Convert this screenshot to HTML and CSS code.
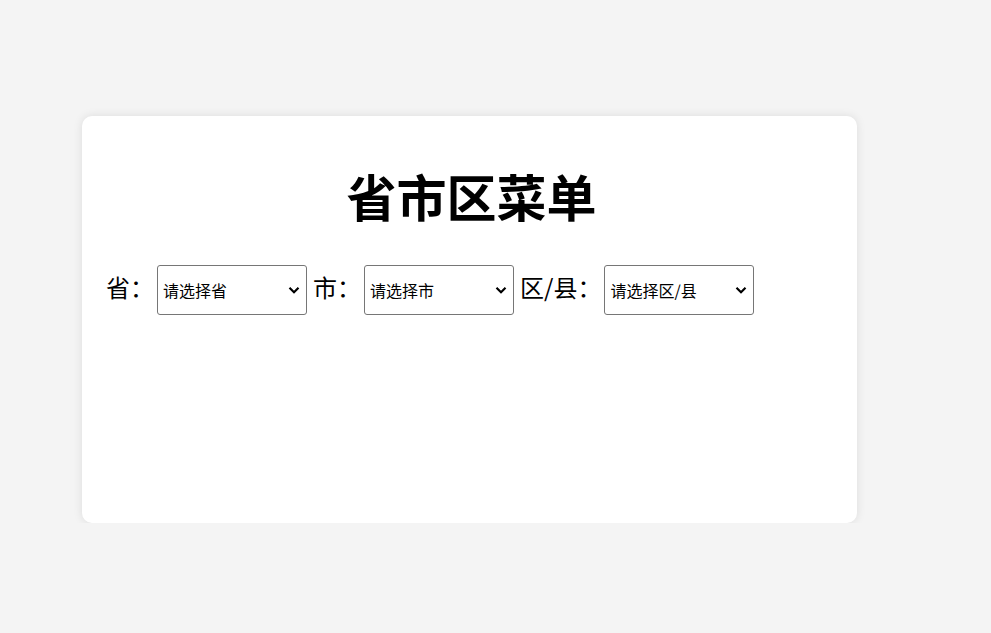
FILE: index.html
```html
<!DOCTYPE html>
<html lang="zh-CN">
<head>
<meta charset="utf-8">
<title>省市区菜单</title>
<link rel="stylesheet" href="styles.css">
</head>
<body>
<div class="card">
  <h1 class="title">省市区菜单</h1>
  <div class="row">
    <label class="lbl">省：</label>
    <select class="sel"><option>请选择省</option></select>
    <label class="lbl">市：</label>
    <select class="sel"><option>请选择市</option></select>
    <label class="lbl">区/县：</label>
    <select class="sel"><option>请选择区/县</option></select>
  </div>
</div>
</body>
</html>
```

FILE: styles.css
```css
html, body {
  margin: 0;
  padding: 0;
}
body {
  background: #f4f4f4;
  font-family: "Noto Sans CJK SC", "Noto Sans", sans-serif;
  padding: 116px 0 0 82px;
}
.card {
  width: 775px;
  height: 407px;
  box-sizing: border-box;
  background: #fff;
  border-radius: 10px;
  box-shadow: 0 0 10px rgba(0, 0, 0, 0.1);
  padding: 43px 20px 20px 24px;
}
.title {
  margin: 0;
  text-align: center;
  font-size: 50px;
  line-height: 72px;
  font-weight: bold;
  color: #000;
}
.row {
  display: flex;
  align-items: center;
  margin-top: 34px;
}
.lbl {
  font-size: 24px;
  color: #000;
  margin-right: 3px;
  margin-bottom: 8px;
}
.sel {
  -webkit-appearance: none;
  appearance: none;
  width: 150px;
  height: 50px;
  box-sizing: border-box;
  font-size: 16px;
  font-family: "Noto Sans CJK SC", sans-serif;
  color: #000;
  margin-right: 6px;
  padding: 0 24px 0 5px;
  background: #fff url("data:image/svg+xml,%3Csvg xmlns='http://www.w3.org/2000/svg' width='12' height='8' viewBox='0 0 12 8'%3E%3Cpath d='M1.5 1.8 L6 6.2 L10.5 1.8' fill='none' stroke='%23000' stroke-width='2.2'/%3E%3C/svg%3E") no-repeat right 6px center;
  border: 1px solid #767676;
  border-radius: 3px;
}
```
